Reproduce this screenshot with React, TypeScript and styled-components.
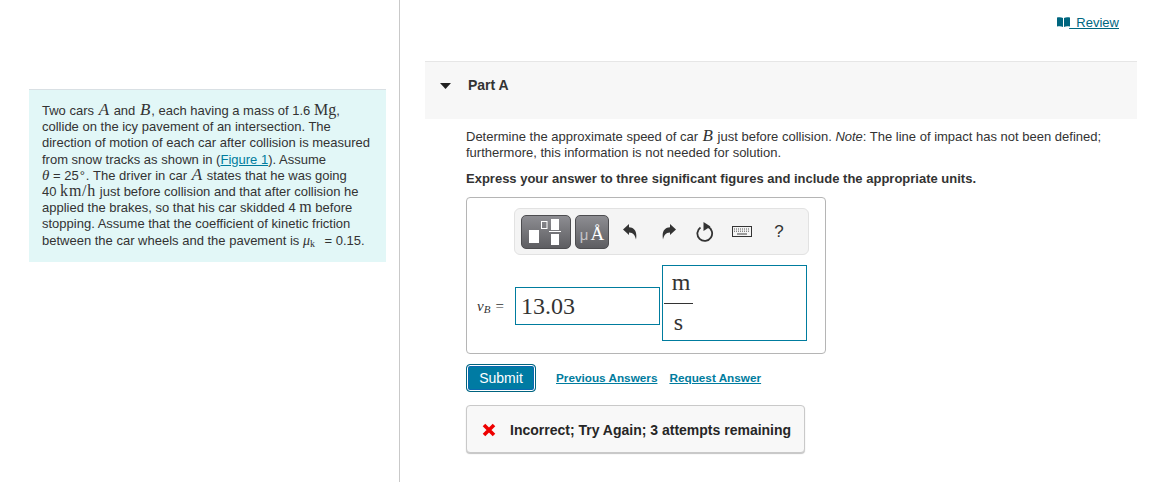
import styled, { createGlobalStyle } from 'styled-components';

const GlobalStyle = createGlobalStyle`
  html, body {
    margin: 0;
    padding: 0;
    background: #ffffff;
  }
  body {
    font-family: "Liberation Sans", Arial, sans-serif;
    font-size: 13px;
    color: #333333;
  }
`;

const Page = styled.div`
  display: flex;
  width: 1162px;
  height: 482px;
  overflow: hidden;
`;

const LeftColumn = styled.aside`
  box-sizing: border-box;
  width: 400px;
  height: 100%;
  padding: 89px 13px 0 29px;
  border-right: 1px solid #c9c9c9;
`;

const ProblemCard = styled.div`
  box-sizing: border-box;
  height: 173px;
  padding: 13px 10px 0 13px;
  background: #e2f7f7;
  border-top: 1px solid #d9e0e4;
  font-size: 13px;
  line-height: 16.2px;
  white-space: nowrap;
`;

const Math = styled.span`
  font-family: "Liberation Serif", "DejaVu Serif", serif;
  font-size: 16px;
  line-height: 0;
`;

const MathUnit = styled(Math)`
  letter-spacing: 0.8px;
`;

const MathVar = styled(Math)`
  font-size: 17px;
  font-style: italic;
  padding: 0 1px;
`;

const MathTheta = styled(Math)`
  font-size: 15px;
  font-style: italic;
`;

const MathGreek = styled(Math)`
  font-size: 14px;
  font-style: italic;
`;

const Sub = styled.sub`
  font-size: 10px;
  line-height: 0;
  vertical-align: -2px;
`;

const MathSub = styled(Sub)`
  font-family: "Liberation Serif", serif;
  margin-right: 6px;
`;

const Degree = styled.span`
  margin: 0 1px;
`;

const TextLink = styled.a`
  color: #007c9e;
  text-decoration: underline;
`;

const RightColumn = styled.main`
  flex: 1;
  display: flex;
  flex-direction: column;
  padding: 0 25px 0 25px;
`;

const ReviewRow = styled.div`
  display: flex;
  justify-content: flex-end;
  height: 61px;
  padding: 15px 18px 0 0;
  box-sizing: border-box;
`;

const ReviewLink = styled.a`
  display: flex;
  align-items: flex-start;
  height: 15px;
  color: #00667f;
  font-size: 13px;
  line-height: 15px;
  text-decoration: underline;
  white-space: pre;
`;

const ReviewIcon = styled.svg`
  width: 13px;
  height: 10px;
  margin: 2px -1px 0 0;
`;

const PartHeader = styled.div`
  display: flex;
  align-items: flex-start;
  height: 58px;
  box-sizing: border-box;
  padding-top: 15px;
  background: #f7f7f7;
  border-top: 1px solid #e6e6e6;
  font-size: 14px;
  font-weight: 700;
  line-height: 16px;
`;

const Caret = styled.svg`
  width: 11px;
  height: 6px;
  margin: 6px 17px 0 15px;
`;

const PartBody = styled.section`
  padding: 10px 0 0 41px;
`;

const Prompt = styled.p`
  margin: 0;
  font-size: 13px;
  line-height: 16px;
`;

const Instruction = styled.p`
  margin: 10px 0 10px;
  font-size: 13px;
  font-weight: 700;
  line-height: 16px;
`;

const AnswerBox = styled.div`
  box-sizing: border-box;
  width: 360px;
  height: 157px;
  padding: 10px 18px 0 10px;
  border: 1px solid #b5b5b5;
  border-radius: 4px;
`;

const Toolbar = styled.div`
  box-sizing: border-box;
  display: flex;
  align-items: center;
  width: 295px;
  height: 47px;
  margin-left: 37px;
  padding: 0 6px;
  background: #f4f4f4;
  border: 1px solid #e2e2e2;
  border-radius: 6px;
`;

const TemplateButton = styled.div<{ $width: number }>`
  box-sizing: border-box;
  display: flex;
  align-items: center;
  justify-content: center;
  width: ${({ $width }) => $width}px;
  height: 34px;
  margin-right: 4px;
  background: linear-gradient(#8d8d92, #5d5d61);
  border: 1px solid #4d4d50;
  border-radius: 5px;
`;

const MicroGlyph = styled.span`
  margin-top: 6px;
  color: #c4c4c8;
  font-family: "Liberation Sans", Arial, sans-serif;
  font-size: 15px;
`;

const AngstromGlyph = styled.span`
  margin: 4px 0 0 2px;
  color: #ffffff;
  font-family: "Liberation Serif", serif;
  font-size: 19px;
`;

const ToolIcon = styled.div<{ $width: number }>`
  display: flex;
  align-items: center;
  justify-content: center;
  width: ${({ $width }) => $width}px;
  height: 34px;
  color: #333333;
  font-size: 17px;
`;

const EquationRow = styled.div`
  display: flex;
  align-items: center;
  margin-top: 10px;
`;

const EquationLabel = styled.span`
  box-sizing: border-box;
  width: 49px;
  margin: 6px 0 0 -11px;
  padding-left: 11px;
  font-family: "Liberation Serif", serif;
  font-size: 15px;
  font-style: italic;
  white-space: nowrap;
`;

const LabelSub = styled(Sub)`
  font-size: 11px;
  margin-right: 5px;
`;

const Upright = styled.span`
  font-style: normal;
`;

const ValueInput = styled.div`
  box-sizing: border-box;
  width: 145px;
  height: 38px;
  margin-top: 6px;
  padding-left: 5px;
  border: 1px solid #007c9e;
  font-family: "Liberation Serif", serif;
  font-size: 24px;
  line-height: 36px;
`;

const UnitInput = styled.div`
  box-sizing: border-box;
  width: 145px;
  height: 76px;
  margin-left: 2px;
  padding: 0 0 0 1px;
  border: 1px solid #007c9e;
  font-family: "Liberation Serif", serif;
  font-size: 24px;
`;

const Fraction = styled.div`
  display: flex;
  flex-direction: column;
  align-items: center;
  width: 29px;
`;

const Numerator = styled.div`
  box-sizing: border-box;
  width: 100%;
  height: 38px;
  padding-left: 5px;
  line-height: 33px;
  text-align: center;
  border-bottom: 1px solid #333333;
`;

const Denominator = styled.div`
  height: 36px;
  line-height: 36px;
`;

const ActionRow = styled.div`
  display: flex;
  align-items: center;
  margin-top: 10px;
`;

const SubmitButton = styled.button`
  box-sizing: border-box;
  width: 70px;
  height: 28px;
  margin-right: 20px;
  padding: 0;
  background: #007ba3;
  border: 1px solid #00637f;
  border-radius: 4px;
  box-shadow: inset 0 0 0 1px #ffffff, inset 0 0 0 2px #0a68b0;
  color: #ffffff;
  font-family: "Liberation Sans", Arial, sans-serif;
  font-size: 14px;
`;

const ActionLink = styled.a`
  margin: 0 12px 2px 0;
  color: #007c9e;
  font-size: 11.75px;
  font-weight: 700;
  text-decoration: underline;
  white-space: nowrap;
`;

const Feedback = styled.div`
  box-sizing: border-box;
  display: flex;
  align-items: center;
  width: 339px;
  height: 48px;
  margin-top: 13px;
  padding: 1px 0 0 15px;
  background: #f8f8f8;
  border: 1px solid #c9c9c9;
  border-radius: 4px;
  box-shadow: 0 1px 1px #c4c4c4;
  color: #262626;
  font-size: 14px;
  font-weight: 700;
  white-space: nowrap;
`;

const CrossIcon = styled.svg`
  width: 14px;
  height: 14px;
  margin-right: 14px;
`;

export default function App() {
  return (
    <Page>
      <GlobalStyle />
      <LeftColumn>
        <ProblemCard>
          Two cars <MathVar>A</MathVar> and <MathVar>B</MathVar>, each having a mass of 1.6 <Math>Mg</Math>,
          <br />
          collide on the icy pavement of an intersection. The
          <br />
          direction of motion of each car after collision is measured
          <br />
          from snow tracks as shown in (<TextLink>Figure 1</TextLink>). Assume
          <br />
          <MathTheta>θ</MathTheta> = 25<Degree>°</Degree>. The driver in car <MathVar>A</MathVar> states that he was going
          <br />
          40 <MathUnit>km/h</MathUnit> just before collision and that after collision he
          <br />
          applied the brakes, so that his car skidded 4 <Math>m</Math> before
          <br />
          stopping. Assume that the coefficient of kinetic friction
          <br />
          between the car wheels and the pavement is <MathGreek>μ</MathGreek>
          <MathSub>k</MathSub> = 0.15.
        </ProblemCard>
      </LeftColumn>

      <RightColumn>
        <ReviewRow>
          <ReviewLink>
            <ReviewIcon viewBox="0 0 13 10">
              <path d="M0 0.5 C2 0 4.5 0 6 1 V10 C4.5 9 2 9 0 9.5 Z M7 1 C8.5 0 11 0 13 0.5 V9.5 C11 9 8.5 9 7 10 Z" fill="#00667f" />
            </ReviewIcon>
            {'  Review'}
          </ReviewLink>
        </ReviewRow>

        <PartHeader>
          <Caret viewBox="0 0 11 6">
            <path d="M0 0 H11 L5.5 6 Z" fill="#222222" />
          </Caret>
          Part A
        </PartHeader>

        <PartBody>
          <Prompt>
            Determine the approximate speed of car <MathVar>B</MathVar> just before collision. <em>Note</em>: The line of impact has not been defined;
            <br />
            furthermore, this information is not needed for solution.
          </Prompt>
          <Instruction>Express your answer to three significant figures and include the appropriate units.</Instruction>

          <AnswerBox>
            <Toolbar>
              <TemplateButton $width={50}>
                <svg width="34" height="26" viewBox="0 0 34 26">
                  <rect x="0" y="11" width="10" height="13" fill="#ffffff" />
                  <rect x="12.5" y="2.5" width="5.5" height="7" fill="none" stroke="#ffffff" />
                  <rect x="22" y="0" width="8" height="11" fill="#ffffff" />
                  <rect x="20" y="12" width="12" height="1" fill="#ffffff" />
                  <rect x="22" y="15" width="8" height="11" fill="#ffffff" />
                </svg>
              </TemplateButton>
              <TemplateButton $width={34}>
                <MicroGlyph>μ</MicroGlyph>
                <AngstromGlyph>Å</AngstromGlyph>
              </TemplateButton>
              <ToolIcon $width={34}>
                <svg width="14" height="16" viewBox="0 0 14 16">
                  <path d="M0 5.5 L6 0 V3.2 C11 3.4 14.5 7 13 15.5 C12 11.5 10.5 8.6 6 8.6 V11 Z" fill="#333333" />
                </svg>
              </ToolIcon>
              <ToolIcon $width={44}>
                <svg width="14" height="16" viewBox="0 0 14 16">
                  <path d="M14 5.5 L8 0 V3.2 C3 3.4 -0.5 7 1 15.5 C2 11.5 3.5 8.6 8 8.6 V11 Z" fill="#333333" />
                </svg>
              </ToolIcon>
              <ToolIcon $width={28}>
                <svg width="18" height="20" viewBox="0 0 18 20">
                  <path d="M11.5 4.6 A7.4 7.4 0 1 1 4.5 5.4" fill="none" stroke="#333333" strokeWidth="1.8" />
                  <path d="M7.5 0 L14.5 4.6 L7.5 9 Z" fill="#333333" />
                </svg>
              </ToolIcon>
              <ToolIcon $width={46}>
                <svg width="20" height="11" viewBox="0 0 20 11">
                  <rect x="0.5" y="0.5" width="19" height="10" fill="#f4f4f4" stroke="#333333" />
                  <path d="M2 3 H18 M2 5.2 H18" stroke="#555555" strokeDasharray="1 1" />
                  <path d="M5 8 H15" stroke="#444444" />
                </svg>
              </ToolIcon>
              <ToolIcon $width={28}>?</ToolIcon>
            </Toolbar>

            <EquationRow>
              <EquationLabel>
                v<LabelSub>B</LabelSub><Upright>=</Upright>
              </EquationLabel>
              <ValueInput>13.03</ValueInput>
              <UnitInput>
                <Fraction>
                  <Numerator>m</Numerator>
                  <Denominator>s</Denominator>
                </Fraction>
              </UnitInput>
            </EquationRow>
          </AnswerBox>

          <ActionRow>
            <SubmitButton>Submit</SubmitButton>
            <ActionLink>Previous Answers</ActionLink>
            <ActionLink>Request Answer</ActionLink>
          </ActionRow>

          <Feedback>
            <CrossIcon viewBox="0 0 14 14">
              <path d="M2 2 L12 12 M12 2 L2 12" stroke="#ee0000" strokeWidth="3.6" />
            </CrossIcon>
            Incorrect; Try Again; 3 attempts remaining
          </Feedback>
        </PartBody>
      </RightColumn>
    </Page>
  );
}
